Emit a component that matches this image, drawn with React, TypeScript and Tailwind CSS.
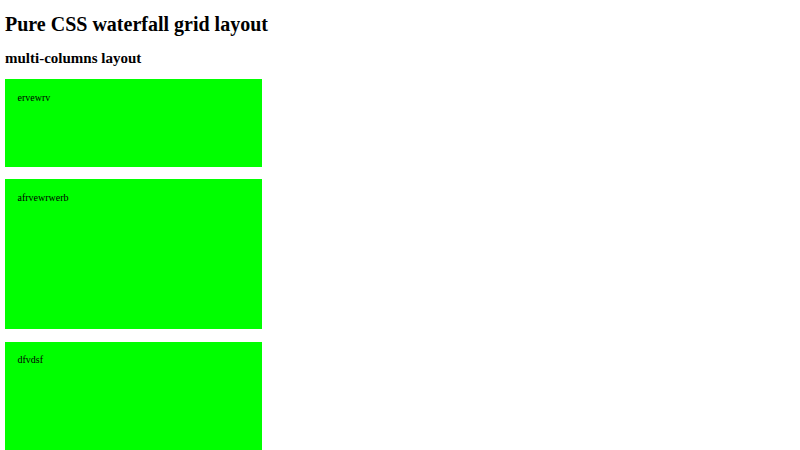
const items = [
  { label: 'ervewrv', h: 'h-[87.5px]' },
  { label: 'afrvewrwerb', h: 'h-[150px]' },
  { label: 'dfvdsf', h: 'h-[200px]' },
];

export default function App() {
  return (
    <div className="px-[5px] font-['Liberation_Serif',serif] leading-[normal] text-black bg-white min-h-screen">
      <h1 className="pt-[13.4px] mb-[13.4px] text-[20px] font-bold leading-[normal]">
        Pure CSS waterfall grid layout
      </h1>
      <h2 className="mb-[12.45px] text-[15px] font-bold leading-[normal]">multi-columns layout</h2>
      <div className="flex flex-col gap-[12.5px] w-[256.67px]">
        {items.map((item) => (
          <div key={item.label} className={`${item.h} shrink-0 bg-[#00ff00] p-[12.5px] text-[10px] leading-[normal]`}>
            {item.label}
          </div>
        ))}
      </div>
    </div>
  );
}
